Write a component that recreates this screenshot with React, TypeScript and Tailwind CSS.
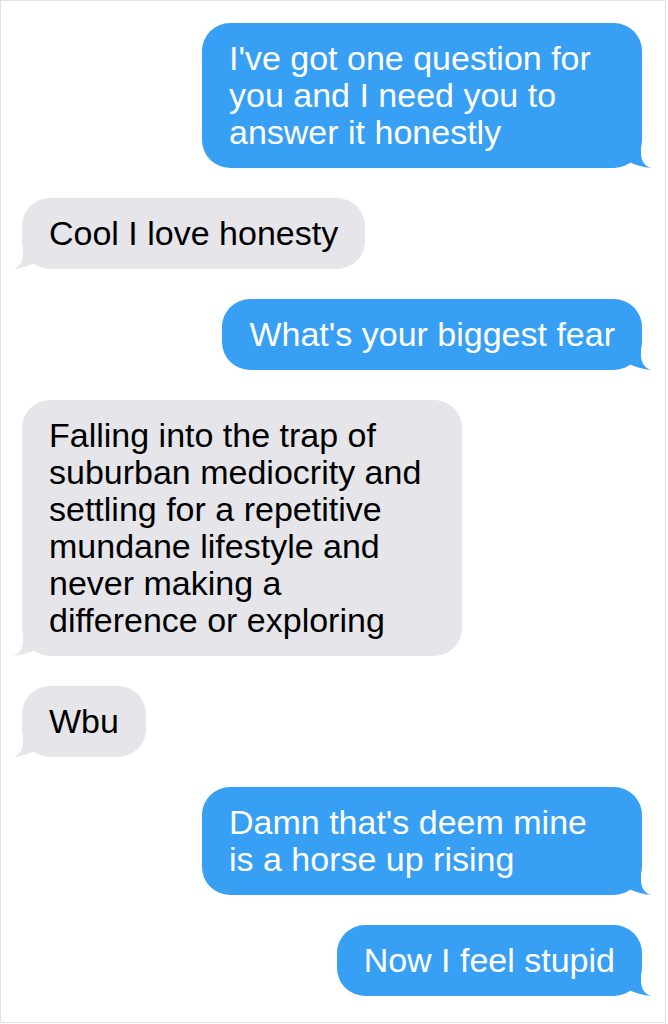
type Side = "me" | "them";

interface Message {
  id: number;
  from: Side;
  text: string;
}

const MESSAGES: Message[] = [
  { id: 1, from: "me", text: "I've got one question for you and I need you to answer it honestly" },
  { id: 2, from: "them", text: "Cool I love honesty" },
  { id: 3, from: "me", text: "What's your biggest fear" },
  {
    id: 4,
    from: "them",
    text: "Falling into the trap of suburban mediocrity and settling for a repetitive mundane lifestyle and never making a difference or exploring",
  },
  { id: 5, from: "them", text: "Wbu" },
  { id: 6, from: "me", text: "Damn that's deem mine is a horse up rising" },
  { id: 7, from: "me", text: "Now I feel stupid" },
];

// the little hook at the bottom corner of a bubble
const Tail = ({ side }: { side: Side }) => (
  <svg
    viewBox="0 0 32 32"
    className={
      side === "me"
        ? "absolute -right-[11px] bottom-0 h-8 w-8 text-[#37a0f4]"
        : "absolute -left-[11px] bottom-0 h-8 w-8 -scale-x-100 text-[#e5e5ea]"
    }
  >
    <path d="M20 0 L20 17 C20 26 25 31 31 32 C22 31.5 14 29 6 25 L0 20 L0 0 Z" fill="currentColor" />
  </svg>
);

const Bubble = ({ message }: { message: Message }) => {
  const isMe = message.from === "me";

  return (
    <div className={`flex ${isMe ? "justify-end" : "justify-start"}`}>
      <div
        className={`relative max-w-[440px] rounded-[28px] px-[27px] py-[17px] text-[34px] leading-[37px] ${
          isMe ? "bg-[#37a0f4] text-white" : "bg-[#e5e5ea] text-black"
        }`}
      >
        <Tail side={message.from} />
        <span className="relative">{message.text}</span>
      </div>
    </div>
  );
};

export default function App() {
  return (
    <div className="w-[668px] bg-white" style={{ fontFamily: '"Liberation Sans", Arial, sans-serif' }}>
      <div className="flex h-[1023px] w-[666px] flex-col gap-[30px] border border-[#e2e2e2] pt-[22px] pl-[21px] pr-[23px]">
        {MESSAGES.map((message) => (
          <Bubble key={message.id} message={message} />
        ))}
      </div>
    </div>
  );
}
